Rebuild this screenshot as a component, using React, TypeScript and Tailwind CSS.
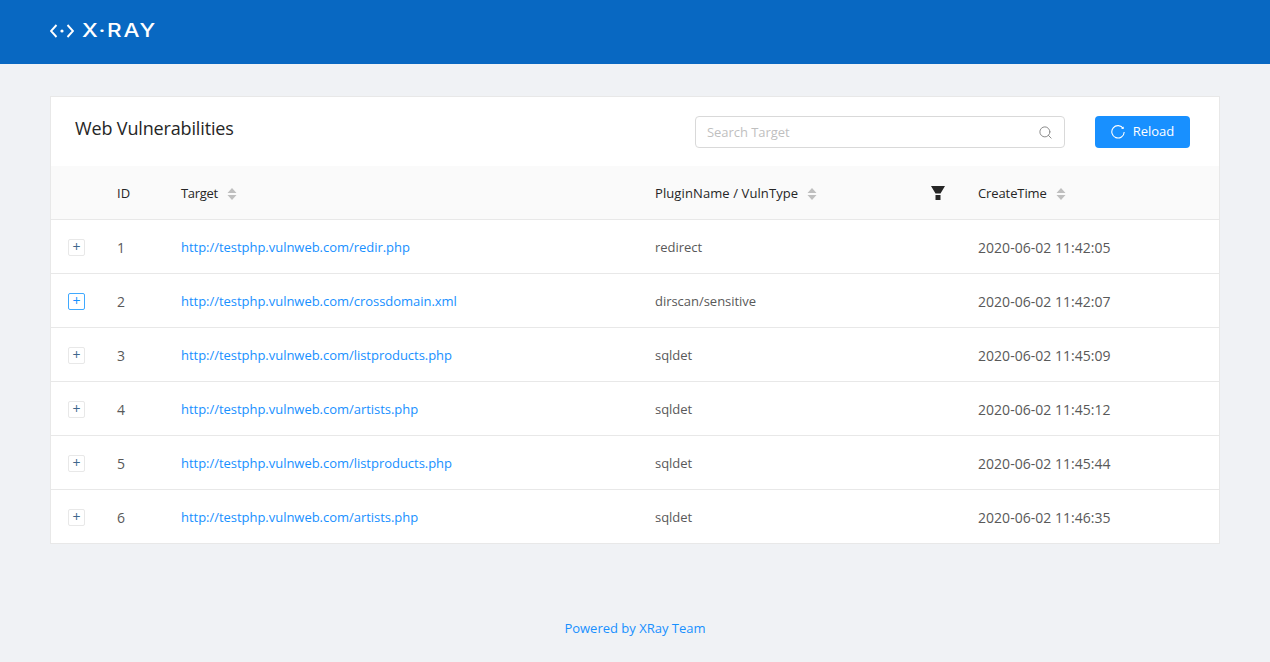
import React from 'react';
import { Search } from 'lucide-react';

const rows = [
  { id: 1, target: 'http://testphp.vulnweb.com/redir.php', plugin: 'redirect', time: '2020-06-02 11:42:05' },
  { id: 2, target: 'http://testphp.vulnweb.com/crossdomain.xml', plugin: 'dirscan/sensitive', time: '2020-06-02 11:42:07', focus: true },
  { id: 3, target: 'http://testphp.vulnweb.com/listproducts.php', plugin: 'sqldet', time: '2020-06-02 11:45:09' },
  { id: 4, target: 'http://testphp.vulnweb.com/artists.php', plugin: 'sqldet', time: '2020-06-02 11:45:12' },
  { id: 5, target: 'http://testphp.vulnweb.com/listproducts.php', plugin: 'sqldet', time: '2020-06-02 11:45:44' },
  { id: 6, target: 'http://testphp.vulnweb.com/artists.php', plugin: 'sqldet', time: '2020-06-02 11:46:35' },
];

function Sorter() {
  return (
    <svg width="10" height="14" viewBox="0 0 10 14" className="ml-[9px] mt-[2px]">
      <path d="M5 1 L9.5 6 H0.5 Z M0.5 8 H9.5 L5 13 Z" fill="#bfbfbf" />
    </svg>
  );
}

function ReloadIcon() {
  return (
    <svg width="14" height="14" viewBox="0 0 14 14" fill="none" stroke="#fff" strokeWidth="1.1">
      <path d="M12.3 3.6 A6.2 6.2 0 1 0 13.2 7" />
      <path d="M12.8 1.4 L12.5 4 L10 3.6 Z" fill="#fff" stroke="none" />
    </svg>
  );
}

export default function App() {
  return (
    <div className="min-h-[662px] bg-[#f0f2f5] text-[13px] font-['Open_Sans',sans-serif] text-[#595959]">
      <header className="flex h-16 items-center bg-[#0868c2] pl-[50px] pb-[2px]">
        <svg width="24" height="14" viewBox="0 0 24 14" fill="none" stroke="#fff" strokeWidth="1.9">
          <path d="M6.5 1 L1 7 L6.5 13" />
          <path d="M17.5 1 L23 7 L17.5 13" />
          <circle cx="12" cy="7" r="1.6" fill="#fff" stroke="none" />
        </svg>
        <span className="ml-[8px] origin-left scale-x-125 font-['Inter',sans-serif] text-[18px] leading-none font-medium tracking-[1.4px] text-white">X·RAY</span>
      </header>

      <main className="px-[50px] pt-8">
        <section className="border border-[#e8e8e8] bg-white">
          <div className="flex h-[69px] items-center pr-[29px] pl-6">
            <h1 className="flex-1 pb-[6px] text-[18px] tracking-[-0.15px] text-[#262626]">Web Vulnerabilities</h1>
            <div className="mt-[1px] flex h-8 w-[370px] items-center justify-between rounded border border-[#d9d9d9] pr-[11px] pl-[11px]">
              <span className="pt-[1px] tracking-[-0.05px] text-[#bfbfbf]">Search Target</span>
              <Search size={15} strokeWidth={1.6} className="text-[#8c8c8c]" />
            </div>
            <button className="mt-[1px] ml-[30px] flex h-8 w-[95px] items-center justify-center gap-2 rounded bg-[#1890ff] text-white">
              <ReloadIcon />
              Reload
            </button>
          </div>

          <table className="w-full table-fixed border-collapse">
            <colgroup>
              <col className="w-[50px]" />
              <col className="w-[80px]" />
              <col className="w-[474px]" />
              <col className="w-[323px]" />
              <col />
            </colgroup>
            <thead>
              <tr className="h-[53px] border-b border-[#e8e8e8] bg-[#fafafa] text-left text-[#262626]">
                <th />
                <th className="pt-[2px] pl-4 font-normal">ID</th>
                <th className="pt-[2px] font-normal">
                  <div className="flex items-center tracking-[-0.3px]">Target<Sorter /></div>
                </th>
                <th className="relative pt-[2px] font-normal">
                  <div className="flex items-center tracking-[0.1px]">PluginName / VulnType<Sorter /></div>
                  <svg width="14" height="14" viewBox="0 0 14 14" className="absolute top-[20px] right-[33px]">
                    <path d="M0 0 H14 L9.5 7.5 H4.5 Z M4.5 9 H9.5 V14 H4.5 Z" fill="#262626" />
                  </svg>
                </th>
                <th className="pt-[2px] font-normal">
                  <div className="flex items-center tracking-[-0.1px]">CreateTime<Sorter /></div>
                </th>
              </tr>
            </thead>
            <tbody>
              {rows.map((row) => (
                <tr key={row.id} className="h-[54px] border-b border-[#e8e8e8] last:border-b-0">
                  <td className="pt-[2px] pl-[17px]">
                    <span className={`flex h-[17px] w-[17px] items-center justify-center rounded-[2px] border bg-white text-[14px] leading-none ${row.focus ? 'border-[#40a9ff] text-[#1890ff]' : 'border-[#e8e8e8] text-[#40668c]'}`}>+</span>
                  </td>
                  <td className="pt-[3px] pl-4 text-[14px]">{row.id}</td>
                  <td className="pt-[3px] tracking-[-0.03px] text-[#1890ff]">{row.target}</td>
                  <td className="pt-[3px] tracking-[-0.03px]">{row.plugin}</td>
                  <td className="pt-[3px] text-[14px] tracking-[0.03px]">{row.time}</td>
                </tr>
              ))}
            </tbody>
          </table>
        </section>

        <footer className="pt-[75px] text-center text-[#1890ff]">Powered by XRay Team</footer>
      </main>
    </div>
  );
}
